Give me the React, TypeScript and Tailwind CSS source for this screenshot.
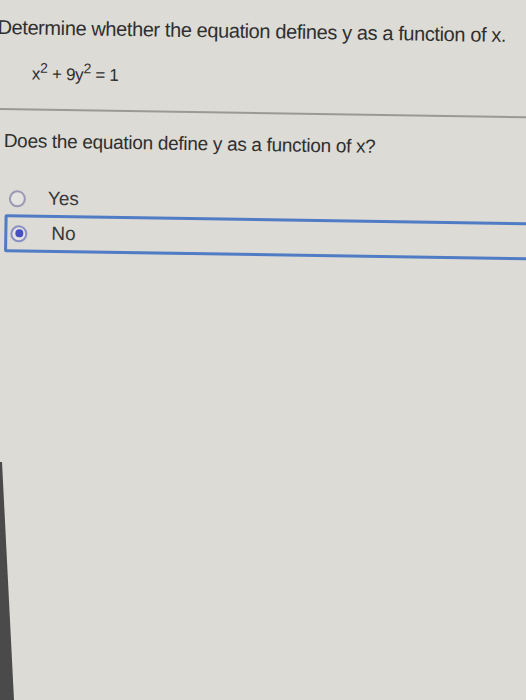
import React from 'react';

const FONT = { fontFamily: "'Liberation Sans', Arial, sans-serif" };

export default function App() {
  return (
    <div className="relative w-[526px] h-[700px] overflow-hidden bg-[#dcdbd5]" style={FONT}>
      <div className="origin-top-left rotate-[0.9deg] pt-[15px]">
        {/* ── Prompt ── */}
        <div className="text-[20px] leading-[24px] text-[#2f2f2f] -ml-[2px] tracking-[-0.4px] whitespace-nowrap">
          Determine whether the equation defines y as a function of x.
        </div>
        <div className="pl-[33px] pt-[24px] text-[17px] leading-[22px] text-[#2f2f2f] tracking-[-0.3px]">
          x<sup className="text-[14px]">2</sup> + 9y<sup className="text-[14px]">2</sup> = 1
        </div>

        <div className="mt-[23px] h-[2px] bg-[#9a9994] w-[560px]" />

        {/* ── Question ── */}
        <div className="pl-[6px] pt-[19px] text-[19px] leading-[24px] text-[#2f2f2f] tracking-[-0.3px] whitespace-nowrap">
          Does the equation define y as a function of x?
        </div>

        {/* ── Choices ── */}
        <div className="mt-[29px] flex flex-col">
          <label className="flex items-center h-[32px] pl-[12px]">
            <span className="w-[17px] h-[17px] rounded-full border-2 border-[#9b99b4] bg-[#e4e3e0]" />
            <span className="ml-[22px] text-[19px] text-[#383838]">Yes</span>
          </label>
          <label className="flex items-center h-[38px] ml-[8px] pl-[3px] w-[560px] border-[3px] border-[#4f7cc4] rounded-[2px]">
            <span className="w-[17px] h-[17px] rounded-full border-2 border-[#8890c6] bg-[#e4e3e0] flex items-center justify-center">
              <span className="w-[8px] h-[8px] rounded-full bg-[#4450c4]" />
            </span>
            <span className="ml-[24px] text-[19px] text-[#383838]">No</span>
          </label>
        </div>
      </div>

      {/* screen edge seen at lower left of the photo */}
      <svg className="absolute left-0 top-0" width="526" height="700">
        <polygon points="0,462 2,462 14,700 0,700" fill="#4a4a4a" />
      </svg>
    </div>
  );
}
